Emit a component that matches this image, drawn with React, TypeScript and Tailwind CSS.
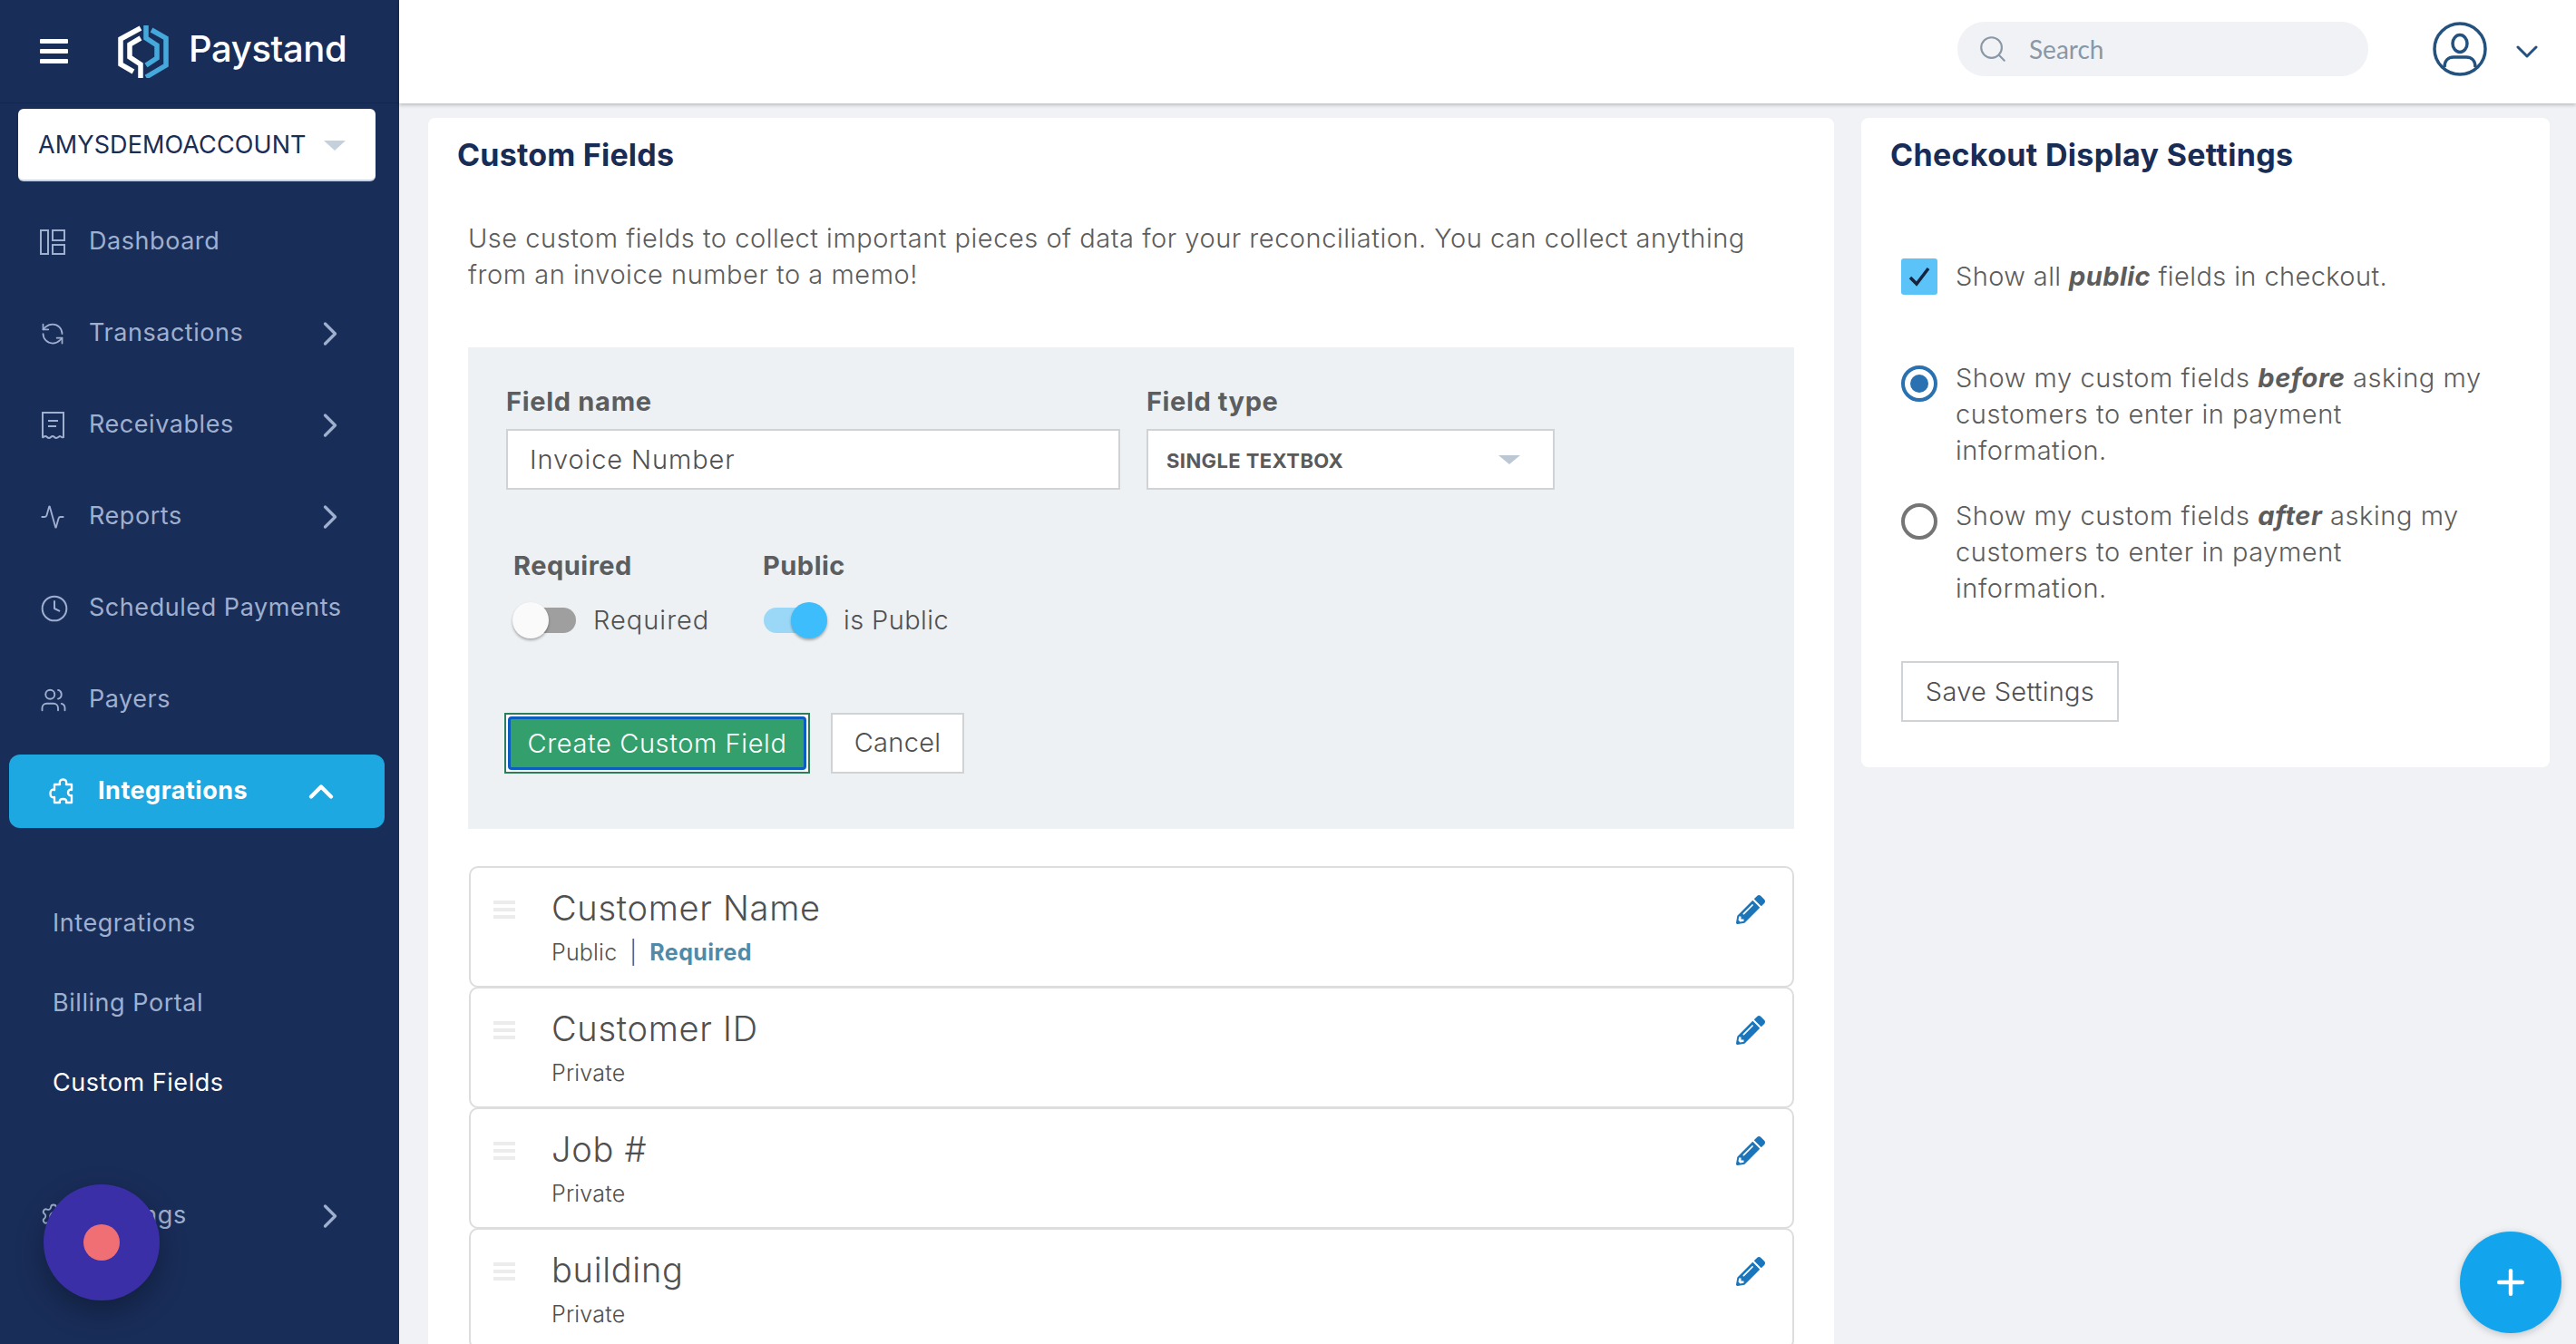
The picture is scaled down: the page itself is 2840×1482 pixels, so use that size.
import { Activity, ChevronDown, ChevronRight, ChevronUp, Clock, Plus, RefreshCcw, Search, Settings, Users } from 'lucide-react';
import { FaPencilAlt } from 'react-icons/fa';

const font = "font-['Inter','Liberation_Sans',sans-serif]";

const DashIcon = () => (
  <svg width="28" height="28" viewBox="0 0 28 28" fill="none" stroke="currentColor" strokeWidth="2">
    <rect x="1" y="1" width="8" height="26" />
    <rect x="14" y="1" width="13" height="11" />
    <rect x="14" y="17" width="13" height="10" />
  </svg>
);

const ReceiptIcon = () => (
  <svg width="28" height="30" viewBox="0 0 28 30" fill="none" stroke="currentColor" strokeWidth="2">
    <path d="M3 1h23v27c-2 1-3-1-4-1s-2 2-4 2-2-2-4-2-2 2-4 2-2-2-4-2-2 2-3 1z" />
    <path d="M9 10h11M9 16h9" />
  </svg>
);

const PuzzleIcon = () => (
  <svg width="30" height="30" viewBox="0 0 30 30" fill="none" stroke="currentColor" strokeWidth="2.4" strokeLinejoin="round">
    <path d="M6 7H12C11 3 13 1.500 15.500 1.500S20 3 19 7H25V13C23 12 21 13.500 21 16S23 20 25 19V27H19C20 24 18 23 15.500 23S11 24 12 27H6V21C3 22 1.500 20 1.500 17S3 12 6 13Z" />
  </svg>
);

const nav = [
  { label: 'Dashboard', icon: <DashIcon /> },
  { label: 'Transactions', icon: <RefreshCcw size={28} strokeWidth={1.5} />, more: true },
  { label: 'Receivables', icon: <ReceiptIcon />, more: true },
  { label: 'Reports', icon: <Activity size={28} strokeWidth={1.6} />, more: true },
  { label: 'Scheduled Payments', icon: <Clock size={32} strokeWidth={1.5} /> },
  { label: 'Payers', icon: <Users size={30} strokeWidth={1.5} /> },
];

const fields = [
  { name: 'Customer Name', vis: 'Public', required: true },
  { name: 'Customer ID', vis: 'Private' },
  { name: 'Job #', vis: 'Private' },
  { name: 'building', vis: 'Private' },
];

const Logo = () => (
  <svg width="56" height="58" viewBox="0 0 56 58" fill="none" strokeWidth="5.5" strokeLinejoin="miter">
    <path d="M25 3 3 15v28l14 8" stroke="#fff" />
    <path d="M25 14 13 21v14l12 8v15" stroke="#fff" />
    <path d="M31 0v14l12 8v14l-12 8" stroke="#45a9dc" />
    <path d="M37 5l16 9v30l-22 13" stroke="#45a9dc" />
  </svg>
);

const Avatar = () => (
  <svg width="60" height="60" viewBox="0 0 60 60" fill="none" stroke="#24527f" strokeWidth="3.5">
    <circle cx="30" cy="30" r="28" />
    <ellipse cx="30" cy="24" rx="8" ry="9.5" />
    <path d="M13 50c0-8 5-11 10-11h14c5 0 10 3 10 11" />
  </svg>
);

const Toggle = ({ on }: { on?: boolean }) => (
  <div className="relative h-[28px] w-[69px]">
    <div className={on ? 'h-full w-[50px] rounded-full bg-[#9bd8f8]' : 'ml-[20px] h-full w-[49px] rounded-full bg-[#9f9f9f]'} />
    <div className={`absolute top-[-6px] h-[40px] w-[40px] rounded-full shadow-[0_2px_3px_rgba(0,0,0,0.3)] ${on ? 'left-[30px] bg-[#3dbdfb]' : 'left-[-1px] bg-[#fafafa]'}`} />
  </div>
);

const SideText = ({ children }: { children: string }) => (
  <span className="whitespace-nowrap text-[27px] tracking-[0.55px] text-[#9fb0cf]">{children}</span>
);

export default function App() {
  return (
    <div className={`relative flex h-[1482px] w-[2840px] overflow-hidden bg-[#f0f2f6] ${font}`}>
      <aside className="flex h-full w-[440px] shrink-0 flex-col bg-[#192d59]">
        <div className="flex h-[114px] shrink-0 items-center border-b border-[#15274e] pl-[44px]">
          <div className="flex w-[31px] flex-col gap-[6px]">
            <div className="h-[5px] rounded-[1px] bg-white" />
            <div className="h-[5px] rounded-[1px] bg-white" />
            <div className="h-[5px] rounded-[1px] bg-white" />
          </div>
          <div className="ml-[55px]">
            <Logo />
          </div>
          <span className="ml-[22px] mt-[-6px] text-[40px] font-medium leading-none tracking-[-0.4px] text-white">Paystand</span>
        </div>
        <div className="ml-[20px] mr-[26px] mt-[6px] flex h-[80px] shrink-0 items-center rounded-[6px] border-b-2 border-[#c9d3e0] bg-white pl-[22px] pt-[2px]">
          <span className="text-[27px] tracking-[0.1px] text-[#1a2d55]">AMYSDEMOACCOUNT</span>
          <div className="ml-[19px] h-0 w-0 border-x-[12px] border-t-[11px] border-x-transparent border-t-[#c5d0dd]" />
        </div>
        <nav className="mt-[16px] flex flex-col">
          {nav.map((n) => (
            <div key={n.label} className="flex h-[101px] items-center pl-[44px] pr-[54px] text-[#9fb0cf]">
              <div className="flex w-[54px] shrink-0 items-center">{n.icon}</div>
              <SideText>{n.label}</SideText>
              {n.more && <ChevronRight size={44} strokeWidth={1.8} className="ml-auto" />}
            </div>
          ))}
          <div className="ml-[10px] mr-[16px] mt-[10px] flex h-[81px] items-center rounded-[12px] bg-[#1ea8e2] pl-[44px] pr-[48px] text-white">
            <PuzzleIcon />
            <span className="ml-[24px] text-[27px] font-bold tracking-[0.5px]">Integrations</span>
            <ChevronUp size={44} strokeWidth={2.4} className="ml-auto" />
          </div>
          <div className="mt-[61px] flex flex-col pl-[58px]">
            <div className="flex h-[88px] items-center"><SideText>Integrations</SideText></div>
            <div className="flex h-[88px] items-center"><SideText>Billing Portal</SideText></div>
            <div className="flex h-[88px] items-center text-[27px] tracking-[0.55px] text-white">Custom Fields</div>
          </div>
          <div className="mt-[52px] flex h-[101px] items-center pl-[44px] pr-[54px] text-[#9fb0cf]">
            <div className="flex w-[54px] items-center"><Settings size={30} strokeWidth={1.5} /></div>
            <SideText>Settings</SideText>
            <ChevronRight size={44} strokeWidth={1.8} className="ml-auto" />
          </div>
        </nav>
      </aside>

      <div className="flex min-w-0 flex-1 flex-col">
        <header className="z-10 flex h-[114px] shrink-0 items-center bg-white pb-[6px] pl-[1718px] shadow-[0_2px_4px_rgba(0,0,0,0.22)]">
          <div className="flex h-[60px] w-[453px] items-center rounded-full bg-[#f0f2f6] pl-[22px] font-['Lato',sans-serif] text-[28px] text-[#8a97a5]">
            <Search size={34} strokeWidth={1.5} />
            <span className="ml-[23px]">Search</span>
          </div>
          <div className="ml-[71px]"><Avatar /></div>
          <ChevronDown size={40} strokeWidth={1.8} className="ml-[24px] mt-[6px] text-[#24527f]" />
        </header>

        <main className="flex gap-[30px] pl-[32px] pt-[16px]">
          <section className="h-[1400px] w-[1550px] shrink-0 rounded-t-[8px] bg-white">
            <h1 className="pl-[32px] pt-[20px] text-[34px] font-bold leading-[42px] tracking-[0.2px] text-[#182c55]">Custom Fields</h1>
            <p className="mx-[44px] mt-[51px] text-[29px] font-light leading-[40px] tracking-[0.52px] text-[#5c5c5c]">
              Use custom fields to collect important pieces of data for your reconciliation. You can collect anything from an invoice number to a memo!
            </p>
            <div className="mx-[44px] mt-[60px] h-[531px] bg-[#edf1f4] pl-[42px] pt-[44px]">
              <div className="flex gap-[29px]">
                <div>
                  <label className="block text-[29px] font-bold leading-[32px] tracking-[0.7px] text-[#5b5d5f]">Field name</label>
                  <div className="mt-[14px] flex h-[67px] w-[677px] items-center border-2 border-[#cfd3d6] bg-white pl-[24px] text-[29px] font-light tracking-[0.9px] text-[#505050]">Invoice Number</div>
                </div>
                <div>
                  <label className="block text-[29px] font-bold leading-[32px] tracking-[0.6px] text-[#5b5d5f]">Field type</label>
                  <div className="mt-[14px] flex h-[67px] w-[450px] items-center border-2 border-[#cfd3d6] bg-white pl-[20px] pr-[36px] text-[22px] font-bold tracking-[0.4px] text-[#5a5a5a]">
                    <span className="mt-[3px]">SINGLE TEXTBOX</span>
                    <div className="ml-auto h-0 w-0 border-x-[12px] border-t-[10px] border-x-transparent border-t-[#bcc7d4]" />
                  </div>
                </div>
              </div>
              <div className="mt-[68px] flex pl-[8px]">
                <div className="w-[275px]">
                  <div className="text-[29px] font-bold leading-[32px] tracking-[0.5px] text-[#5b5d5f]">Required</div>
                  <div className="mt-[22px] flex items-center gap-[19px]">
                    <Toggle />
                    <span className="text-[29px] font-light tracking-[1px] text-[#505050]">Required</span>
                  </div>
                </div>
                <div>
                  <div className="text-[29px] font-bold leading-[32px] tracking-[0.5px] text-[#5b5d5f]">Public</div>
                  <div className="mt-[22px] flex items-center gap-[20px]">
                    <div className="ml-[1px]"><Toggle on /></div>
                    <span className="ml-[-1px] text-[29px] font-light tracking-[0.4px] text-[#505050]">is Public</span>
                  </div>
                </div>
              </div>
              <div className="ml-[-2px] mt-[80px] flex gap-[23px]">
                <button className="h-[67px] w-[337px] border-2 border-[#2e7d5a] bg-white p-[2px]">
                  <div className="flex h-full w-full items-center justify-center rounded-[4px] border-[3px] border-[#0b5ec0] bg-[#339f6c] pt-[2px] text-[29px] font-light tracking-[0.6px] text-white">Create Custom Field</div>
                </button>
                <button className="h-[67px] w-[147px] border-2 border-[#cfd3d6] bg-white text-[29px] font-light tracking-[0.3px] text-[#505050]">Cancel</button>
              </div>
            </div>
            <div className="ml-[45px] mr-[44px] mt-[41px] flex flex-col">
              {fields.map((f) => (
                <div key={f.name} className="relative flex h-[134px] shrink-0 rounded-[10px] border-2 border-[#dddddd] bg-white pl-[25px] pr-[30px] [&+&]:mt-[-1px]">
                  <div className="mt-[36px] flex h-[20px] w-[24px] flex-col justify-between">
                    <div className="h-[4px] bg-[#ececec]" />
                    <div className="h-[4px] bg-[#ececec]" />
                    <div className="h-[4px] bg-[#ececec]" />
                  </div>
                  <div className="ml-[40px] pt-[22px]">
                    <div className="text-[38px] font-light leading-[44px] tracking-[0.7px] text-[#505050]">{f.name}</div>
                    <div className="mt-[11px] text-[25px] font-light leading-[32px] tracking-[0.2px] text-[#505050]">
                      {f.vis}
                      {f.required && (
                        <>
                          <span className="mx-[14px]">|</span>
                          <span className="font-bold tracking-[0.4px] text-[#4f8ba8]">Required</span>
                        </>
                      )}
                    </div>
                  </div>
                  <FaPencilAlt size={32} className="ml-auto mt-[30px] text-[#1a75bb]" />
                </div>
              ))}
            </div>
          </section>

          <section className="h-[716px] w-[759px] shrink-0 rounded-[8px] bg-white pl-[32px]">
            <h2 className="pt-[20px] text-[34px] font-bold leading-[42px] tracking-[0.32px] text-[#182c55]">Checkout Display Settings</h2>
            <div className="ml-[12px] mt-[93px] flex items-center gap-[20px]">
              <div className="flex h-[40px] w-[40px] items-center justify-center rounded-[3px] bg-[#5cc3f9]">
                <svg width="26" height="24" viewBox="0 0 26 24" fill="none" stroke="#14243f" strokeWidth="3.5"><path d="M3 13l7 7L23 3" /></svg>
              </div>
              <p className="text-[29px] font-light leading-[40px] tracking-[0.4px] text-[#5c5c5c]">Show all <b className="font-bold italic">public</b> fields in checkout.</p>
            </div>
            <div className="ml-[12px] mt-[72px] flex gap-[20px]">
              <div className="mt-[6px] flex h-[40px] w-[40px] shrink-0 items-center justify-center rounded-full border-[4px] border-[#2a71b1]">
                <div className="h-[20px] w-[20px] rounded-full bg-[#2a71b1]" />
              </div>
              <p className="w-[586px] text-[29px] font-light leading-[40px] tracking-[0.55px] text-[#5c5c5c]">Show my custom fields <b className="font-bold italic">before</b> asking my customers to enter in payment information.</p>
            </div>
            <div className="ml-[12px] mt-[32px] flex gap-[20px]">
              <div className="mt-[6px] h-[40px] w-[40px] shrink-0 rounded-full border-[4px] border-[#757575]" />
              <p className="w-[586px] text-[29px] font-light leading-[40px] tracking-[0.55px] text-[#5c5c5c]">Show my custom fields <b className="font-bold italic">after</b> asking my customers to enter in payment information.</p>
            </div>
            <button className="ml-[12px] mt-[60px] h-[67px] w-[240px] border-2 border-[#cfd3d6] bg-white text-[29px] font-light tracking-[0.3px] text-[#505050]">Save Settings</button>
          </section>
        </main>
      </div>

      <div className="absolute left-[48px] top-[1306px] flex h-[128px] w-[128px] items-center justify-center rounded-full bg-[#3a2fa6] shadow-[0_12px_32px_rgba(0,0,0,0.3)]">
        <div className="h-[40px] w-[40px] rounded-full bg-[#ef6f74]" />
      </div>
      <div className="absolute left-[2712px] top-[1358px] flex h-[112px] w-[112px] items-center justify-center rounded-full bg-[#12a5ee] text-white shadow-[0_2px_8px_rgba(0,0,0,0.2)]">
        <Plus size={44} strokeWidth={2.4} />
      </div>
    </div>
  );
}
